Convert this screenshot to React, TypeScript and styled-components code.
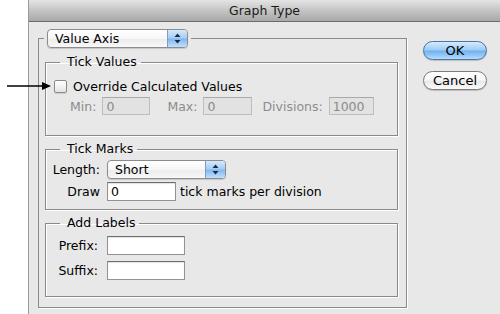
import React from 'react'
import styled, { createGlobalStyle } from 'styled-components'

const GlobalStyle = createGlobalStyle`
  body {
    margin: 0;
    background: #fff;
    font-family: "DejaVu Sans", "Liberation Sans", sans-serif;
    font-size: 12.5px;
    color: #000;
  }
`

const St = {
  Page: styled.div`
    position: relative;
    width: 500px;
    height: 314px;
    display: flex;
    padding-left: 28px;
    box-sizing: border-box;
    overflow: hidden;
  `,
  Arrow: styled.svg`
    position: absolute;
    left: 0;
    top: 78px;
  `,
  Window: styled.div`
    flex: 1;
    display: flex;
    flex-direction: column;
    background: #e8e8e8;
    border-left: 1px solid #9a9a9a;
  `,
  TitleBar: styled.div`
    height: 21px;
    line-height: 22px;
    text-align: center;
    background: linear-gradient(#e4e4e4, #c4c4c4 50%, #a8a8a8);
    border-bottom: 1px solid #6c6c6c;
    color: #1a1a1a;
  `,
  Body: styled.div`
    display: flex;
    align-items: flex-start;
    gap: 16px;
    padding: 7px 13px 0 9px;
  `,
  Outer: styled.fieldset`
    width: 369px;
    box-sizing: border-box;
    margin: 0;
    padding: 0 8px 10px 6px;
    min-width: 0;
    border: 1px solid #8a8a8a;
    box-shadow: 1px 1px 0 #fff;
  `,
  OuterLegend: styled.legend`
    padding: 0 3px;
    margin-left: -1px;
  `,
  Group: styled.fieldset<{ $pb: number }>`
    margin: 5px 0 0;
    padding: 0 7px ${({ $pb }) => $pb}px 8px;
    min-width: 0;
    border: 1px solid #8a8a8a;
    box-shadow: 1px 1px 0 #fff, inset 1px 1px 0 #fff;
    &:first-of-type {
      margin-top: 6px;
    }
  `,
  GroupLegend: styled.legend`
    margin-left: 6px;
    padding: 0 4px 0 7px;
    line-height: 16px;
  `,
  CheckRow: styled.label`
    display: flex;
    align-items: center;
    height: 16px;
    margin-top: 8px;
    gap: 6px;
  `,
  Check: styled.span`
    width: 13px;
    height: 13px;
    box-sizing: border-box;
    border: 1px solid #8a8a8a;
    border-radius: 2px;
    background: linear-gradient(#fff, #f0f0f0 60%, #e2e2e2);
    box-shadow: 0 1px 1px rgba(0, 0, 0, 0.12);
  `,
  RangeRow: styled.div`
    display: flex;
    align-items: center;
    margin-top: 3px;
    padding-left: 16px;
  `,
  DimLabel: styled.span<{ $ml?: number }>`
    color: #8c8c8c;
    margin-left: ${({ $ml }) => $ml ?? 0}px;
    margin-right: 6px;
  `,
  DimField: styled.input<{ $w: number }>`
    width: ${({ $w }) => $w}px;
    height: 18px;
    box-sizing: border-box;
    padding: 0 3px;
    border: 1px solid #bdbdbd;
    border-top-color: #a9a9a9;
    background: #e2e2e2;
    color: #8a8a8a;
    font: inherit;
    outline: none;
  `,
  Grid: styled.div<{ $col: number; $gap: number; $rowGap: number; $pt: number }>`
    display: grid;
    grid-template-columns: ${({ $col }) => $col}px auto;
    column-gap: ${({ $gap }) => $gap}px;
    row-gap: ${({ $rowGap }) => $rowGap}px;
    align-items: center;
    justify-items: start;
    padding-top: ${({ $pt }) => $pt}px;
  `,
  Label: styled.span`
    justify-self: end;
  `,
  Inline: styled.div`
    display: flex;
    align-items: center;
    gap: 4px;
  `,
  Field: styled.input<{ $w: number }>`
    width: ${({ $w }) => $w}px;
    height: 19px;
    box-sizing: border-box;
    padding: 0 3px;
    border: 1px solid #929292;
    border-top-color: #6e6e6e;
    box-shadow: inset 0 1px 1px rgba(0, 0, 0, 0.12);
    background: #fff;
    color: #000;
    font: inherit;
    outline: none;
  `,
  Popup: styled.div<{ $w: number }>`
    width: ${({ $w }) => $w}px;
    height: 19px;
    box-sizing: border-box;
    display: flex;
    border: 1px solid #8c8c8c;
    border-radius: 4px;
    overflow: hidden;
    background: linear-gradient(#fff, #f6f6f6 50%, #ebebeb 51%, #f8f8f8);
    box-shadow: 0 1px 1px rgba(0, 0, 0, 0.15);
  `,
  PopupText: styled.span`
    flex: 1;
    padding-left: 7px;
    line-height: 17px;
  `,
  PopupArrows: styled.span`
    width: 19px;
    display: flex;
    align-items: center;
    justify-content: center;
    border-left: 1px solid #7d9cc6;
    background: linear-gradient(#d4e8fb, #a6cdf5 48%, #7fb6ef 52%, #bfe0fd);
  `,
  Buttons: styled.div`
    display: flex;
    flex-direction: column;
    gap: 11px;
    margin-top: 12px;
  `,
  Button: styled.button<{ $primary?: boolean }>`
    width: 64px;
    height: 19px;
    padding: 0;
    border-radius: 10px;
    font: inherit;
    font-size: 13px;
    line-height: 17px;
    color: #000;
    border: 1px solid ${({ $primary }) => ($primary ? '#4b74a8' : '#7c7c7c')};
    background: ${({ $primary }) =>
      $primary
        ? 'linear-gradient(#d6ebfd, #9fcdf6 45%, #72b2ef 55%, #b6dcfd)'
        : 'linear-gradient(#fff, #f7f7f7 45%, #e9e9e9 55%, #fafafa)'};
    box-shadow: 0 1px 1px rgba(0, 0, 0, 0.18);
  `,
}

const Arrows = () => (
  <svg width="7" height="11" viewBox="0 0 7 11">
    <path d="M3.5 0.5 L6.5 4 L0.5 4 Z M3.5 10.5 L6.5 7 L0.5 7 Z" fill="#1c2a44" />
  </svg>
)

const PopupButton = ({ label, width }: { label: string; width: number }) => (
  <St.Popup $w={width}>
    <St.PopupText>{label}</St.PopupText>
    <St.PopupArrows>
      <Arrows />
    </St.PopupArrows>
  </St.Popup>
)

const App = () => {
  return (
    <>
      <GlobalStyle />
      <St.Page>
        <St.Arrow width="54" height="16" viewBox="0 78 54 16">
          <line x1="7" y1="86" x2="44" y2="86" stroke="#000" strokeWidth="1.6" />
          <path d="M51 86 L42 82 L42 90 Z" fill="#000" />
        </St.Arrow>
        <St.Window>
          <St.TitleBar>Graph Type</St.TitleBar>
          <St.Body>
            <St.Outer>
              <St.OuterLegend>
                <PopupButton label="Value Axis" width={141} />
              </St.OuterLegend>

              <St.Group $pb={20}>
                <St.GroupLegend>Tick Values</St.GroupLegend>
                <St.CheckRow>
                  <St.Check />
                  Override Calculated Values
                </St.CheckRow>
                <St.RangeRow>
                  <St.DimLabel>Min:</St.DimLabel>
                  <St.DimField $w={48} disabled defaultValue="0" />
                  <St.DimLabel $ml={17}>Max:</St.DimLabel>
                  <St.DimField $w={49} disabled defaultValue="0" />
                  <St.DimLabel $ml={10}>Divisions:</St.DimLabel>
                  <St.DimField $w={45} disabled defaultValue="1000" />
                </St.RangeRow>
              </St.Group>

              <St.Group $pb={8}>
                <St.GroupLegend>Tick Marks</St.GroupLegend>
                <St.Grid $col={46} $gap={7} $rowGap={3} $pt={3}>
                  <St.Label>Length:</St.Label>
                  <PopupButton label="Short" width={119} />
                  <St.Label>Draw</St.Label>
                  <St.Inline>
                    <St.Field $w={69} defaultValue="0" />
                    tick marks per division
                  </St.Inline>
                </St.Grid>
              </St.Group>

              <St.Group $pb={16}>
                <St.GroupLegend>Add Labels</St.GroupLegend>
                <St.Grid $col={44} $gap={9} $rowGap={6} $pt={5}>
                  <St.Label>Prefix:</St.Label>
                  <St.Field $w={78} defaultValue="" />
                  <St.Label>Suffix:</St.Label>
                  <St.Field $w={78} defaultValue="" />
                </St.Grid>
              </St.Group>
            </St.Outer>

            <St.Buttons>
              <St.Button $primary>OK</St.Button>
              <St.Button>Cancel</St.Button>
            </St.Buttons>
          </St.Body>
        </St.Window>
      </St.Page>
    </>
  )
}

export default App
